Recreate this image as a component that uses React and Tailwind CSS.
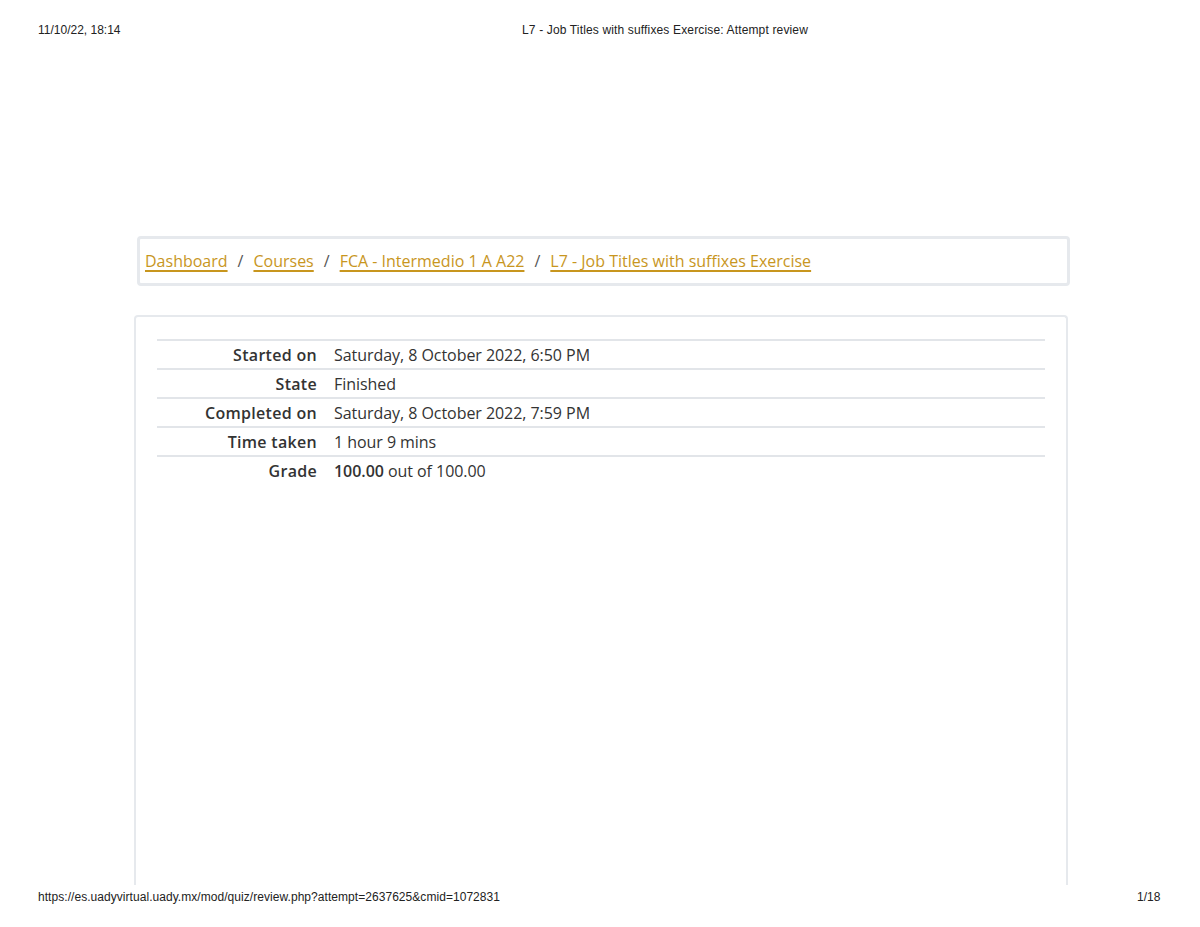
import React from "react";

const rows = [
  ["Started on", "Saturday, 8 October 2022, 6:50 PM"],
  ["State", "Finished"],
  ["Completed on", "Saturday, 8 October 2022, 7:59 PM"],
  ["Time taken", "1 hour 9 mins"],
  ["Grade", null],
];

export default function App() {
  const crumbs = ["Dashboard", "Courses", "FCA - Intermedio 1 A A22", "L7 - Job Titles with suffixes Exercise"];
  return (
    <div className="w-[1200px] h-[927px] bg-white flex flex-col overflow-hidden">
      <div className="h-[60px] relative text-[12px] leading-[16px] text-[#222] [font-family:'Liberation_Sans',Arial,sans-serif]">
        <span className="absolute left-[38px] top-[22px]">11/10/22, 18:14</span>
        <span className="absolute left-[522px] top-[22px] tracking-[0.15px]">L7 - Job Titles with suffixes Exercise: Attempt review</span>
      </div>
      <div className="h-[176px]" />
      <div className="ml-[137px] w-[933px] h-[50px] border-[3px] border-[#e6e9ed] rounded-[4px] flex items-center px-[5px] text-[16px] [font-family:'Open_Sans',sans-serif]">
        {crumbs.map((c, i) => (
          <React.Fragment key={c}>
            {i > 0 && <span className="mx-[10px] text-[#555]">/</span>}
            <a className="text-[#c8961e] underline decoration-[2px] underline-offset-[3px]">{c}</a>
          </React.Fragment>
        ))}
      </div>
      <div className="h-[29px]" />
      <div className="ml-[134px] w-[934px] flex-1 border-[2px] border-b-0 border-[#e6e9ed] rounded-t-[4px] pt-[22px] px-[21px] [font-family:'Open_Sans',sans-serif] text-[16px] text-[#333]">
        <div className="w-[888px]">
          {rows.map(([k, v]) => (
            <div key={k} className="flex items-center h-[29px] border-t-[2px] border-[#e2e5e9]">
              <div className="w-[160px] text-right font-semibold tracking-[0.3px]">{k}</div>
              <div className="pl-[17px] tracking-[-0.05px]">
                {v !== null ? v : (<><span className="font-semibold">100.00</span> out of 100.00</>)}
              </div>
            </div>
          ))}
        </div>
      </div>
      <div className="h-[42px] relative text-[12px] leading-[16px] text-[#222] [font-family:'Liberation_Sans',Arial,sans-serif]">
        <span className="absolute left-[38px] top-[4px] tracking-[0.05px]">https://es.uadyvirtual.uady.mx/mod/quiz/review.php?attempt=2637625&amp;cmid=1072831</span>
        <span className="absolute left-[1137px] top-[4px]">1/18</span>
      </div>
    </div>
  );
}
